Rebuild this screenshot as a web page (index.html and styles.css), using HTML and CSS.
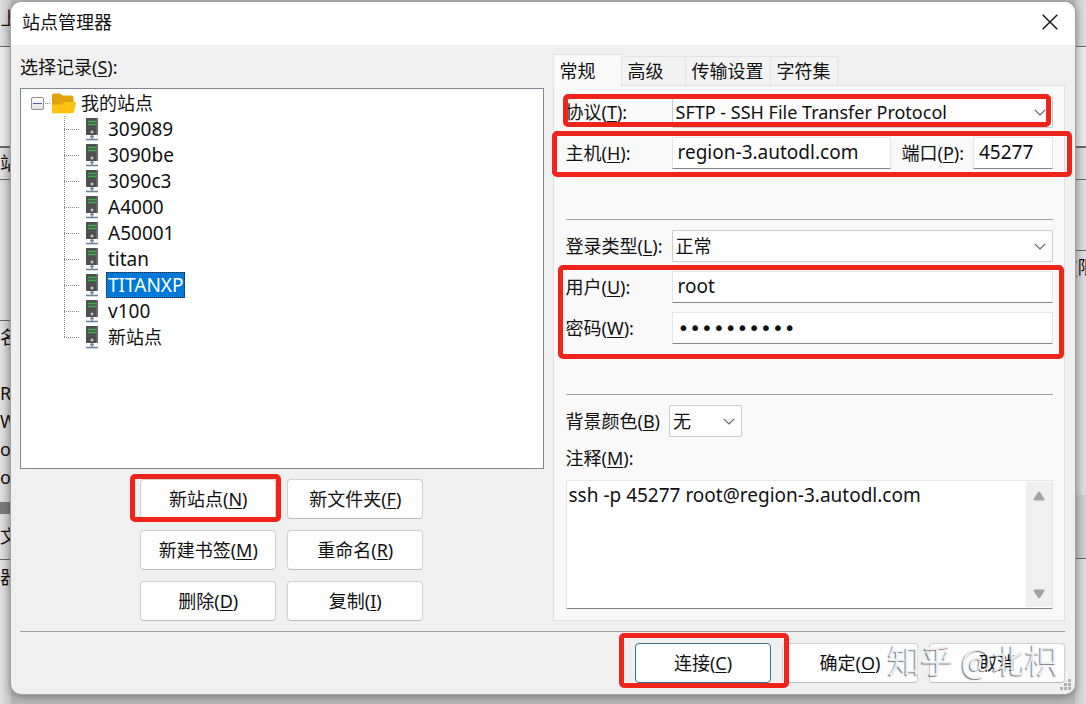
FILE: index.html
```html
<!DOCTYPE html>
<html lang="zh-CN">
<head>
    <meta charset="UTF-8">
    <meta name="viewport" content="width=device-width, initial-scale=1.0">
    <title>站点管理器</title>
    <link rel="stylesheet" href="styles.css">
</head>
<body>
    <!-- main window behind the dialog -->
    <div class="desktop" aria-hidden="true">
        <div class="strip">
            <div class="pane pane-menu">(上</div>
            <div class="pane pane-log"></div>
            <div class="pane pane-site">站</div>
            <div class="pane pane-tree"></div>
            <div class="pane pane-files">
                <div>名</div>
                <div></div>
                <div>Re</div>
                <div>W</div>
                <div>or</div>
                <div>o</div>
            </div>
            <div class="pane pane-scroll"></div>
            <div class="pane pane-status">文</div>
            <div class="pane pane-queue">器</div>
        </div>
        <div class="strip strip-right">
            <div class="pane pane-menu"></div>
            <div class="pane pane-log"></div>
            <div class="pane pane-site"></div>
            <div class="pane pane-remote"></div>
            <div class="pane pane-rights">(限</div>
            <div class="pane pane-status"></div>
            <div class="pane pane-queue"></div>
        </div>
    </div>

    <div class="dialog" role="dialog" aria-labelledby="dialog_title">
        <header class="titlebar">
            <h1 id="dialog_title">站点管理器</h1>
            <button class="close" type="button" aria-label="关闭">
                <svg width="16" height="16" viewBox="0 0 16 16"><path d="M0.7 0.7L15.3 15.3M15.3 0.7L0.7 15.3"/></svg>
            </button>
        </header>

        <form class="content">
            <div class="columns">
                <section class="sites">
                    <div class="caption" id="tree_label">选择记录(<u>S</u>):</div>
                    <div class="tree" role="tree" aria-labelledby="tree_label">
                        <div class="root" role="treeitem" aria-expanded="true">
                            <span class="expander"></span>
                            <span class="joint"></span>
                            <svg class="folder" width="25" height="21" viewBox="0 0 25 21">
                                <path d="M1 2.2Q1 .5 2.600 .5H9L11.500 2.500H20.500Q22.500 2.500 22.500 4.500V16H1z" fill="#e3a20c"/>
                                <path d="M1 20V12.500Q1 11.500 2.200 11.500H10.500L13.500 9H24Q25 9 24.800 10L23 18.800Q22.700 20.200 21.300 20.200H1z" fill="#ffc20e"/>
                            </svg>
                            <span class="name">我的站点</span>
                        </div>
                        <ul class="items" role="group">
                            <li role="treeitem"><span class="branch"></span><svg class="server" width="12" height="23"><use href="#server"/></svg><span class="name">309089</span></li>
                            <li role="treeitem"><span class="branch"></span><svg class="server" width="12" height="23"><use href="#server"/></svg><span class="name">3090be</span></li>
                            <li role="treeitem"><span class="branch"></span><svg class="server" width="12" height="23"><use href="#server"/></svg><span class="name">3090c3</span></li>
                            <li role="treeitem"><span class="branch"></span><svg class="server" width="12" height="23"><use href="#server"/></svg><span class="name">A4000</span></li>
                            <li role="treeitem"><span class="branch"></span><svg class="server" width="12" height="23"><use href="#server"/></svg><span class="name">A50001</span></li>
                            <li role="treeitem"><span class="branch"></span><svg class="server" width="12" height="23"><use href="#server"/></svg><span class="name">titan</span></li>
                            <li role="treeitem" aria-selected="true"><span class="branch"></span><svg class="server" width="12" height="23"><use href="#server"/></svg><span class="name selected">TITANXP</span></li>
                            <li role="treeitem"><span class="branch"></span><svg class="server" width="12" height="23"><use href="#server"/></svg><span class="name">v100</span></li>
                            <li role="treeitem"><span class="branch"></span><svg class="server" width="12" height="23"><use href="#server"/></svg><span class="name">新站点</span></li>
                        </ul>
                    </div>
                    <div class="site-buttons">
                        <div class="marked">
                            <button class="btn" type="button">新站点(<u>N</u>)</button>
                            <span class="mark mark-new"></span>
                        </div>
                        <button class="btn" type="button">新文件夹(<u>F</u>)</button>
                        <button class="btn" type="button">新建书签(<u>M</u>)</button>
                        <button class="btn" type="button">重命名(<u>R</u>)</button>
                        <button class="btn" type="button">删除(<u>D</u>)</button>
                        <button class="btn" type="button">复制(<u>I</u>)</button>
                    </div>
                </section>

                <section class="settings">
                    <div class="tabs" role="tablist">
                        <button class="tab active" type="button" role="tab" aria-selected="true">常规</button>
                        <button class="tab tab-wide" type="button" role="tab">高级</button>
                        <button class="tab" type="button" role="tab">传输设置</button>
                        <button class="tab" type="button" role="tab">字符集</button>
                    </div>
                    <div class="panel" role="tabpanel">
                        <div class="group marked">
                            <div class="row">
                                <label for="protocol">协议(<u>T</u>):</label>
                                <div class="select">
                                    <select id="protocol"><option>SFTP - SSH File Transfer Protocol</option></select>
                                    <svg width="12" height="7" viewBox="0 0 12 7"><path d="M.8.8L6 6L11.200.8"/></svg>
                                </div>
                            </div>
                            <span class="mark mark-protocol"></span>
                        </div>
                        <div class="group marked">
                            <div class="row row-host">
                                <label for="host">主机(<u>H</u>):</label>
                                <input class="field" id="host" type="text" value="region-3.autodl.com">
                                <label class="port-label" for="port">端口(<u>P</u>):</label>
                                <input class="field" id="port" type="text" value="45277">
                            </div>
                            <span class="mark mark-host"></span>
                        </div>
                        <hr class="divider">
                        <div class="row">
                            <label for="logon">登录类型(<u>L</u>):</label>
                            <div class="select">
                                <select id="logon"><option>正常</option></select>
                                <svg width="12" height="7" viewBox="0 0 12 7"><path d="M.8.8L6 6L11.200.8"/></svg>
                            </div>
                        </div>
                        <div class="group marked">
                            <div class="row">
                                <label for="user">用户(<u>U</u>):</label>
                                <input class="field" id="user" type="text" value="root">
                            </div>
                            <div class="row">
                                <label for="pass">密码(<u>W</u>):</label>
                                <input class="field password" id="pass" type="password" value="0123456789">
                            </div>
                            <span class="mark mark-login"></span>
                        </div>
                        <hr class="divider">
                        <div class="row row-color">
                            <label for="color">背景颜色(<u>B</u>)</label>
                            <div class="select">
                                <select id="color"><option>无</option></select>
                                <svg width="12" height="7" viewBox="0 0 12 7"><path d="M.8.8L6 6L11.200.8"/></svg>
                            </div>
                        </div>
                        <label class="notes-label" for="notes">注释(<u>M</u>):</label>
                        <div class="notes">
                            <textarea id="notes">ssh -p 45277 root@region-3.autodl.com</textarea>
                            <div class="scrollbar">
                                <svg width="12" height="10" viewBox="0 0 12 10"><path d="M5 1.200Q6 0 7 1.200L11.500 8Q12 9.500 10.500 9.500H1.500Q0 9.500 .5 8z"/></svg>
                                <svg width="12" height="10" viewBox="0 0 12 10"><path d="M5 8.800Q6 10 7 8.800L11.500 2Q12 .5 10.500 .5H1.500Q0 .5 .5 2z"/></svg>
                            </div>
                        </div>
                    </div>
                </section>
            </div>

            <footer class="actions">
                <div class="marked">
                    <button class="btn btn-default" type="submit">连接(<u>C</u>)</button>
                    <span class="mark mark-connect"></span>
                </div>
                <button class="btn" type="button">确定(<u>O</u>)</button>
                <button class="btn" type="button">取消</button>
            </footer>
        </form>

        <svg class="grip" width="12" height="12" viewBox="0 0 12 12">
            <path d="M8 0h3v3H8zM4 4h3v3H4zM8 4h3v3H8zM0 8h3v3H0zM4 8h3v3H4zM8 8h3v3H8z"/>
        </svg>
        <div class="watermark">知乎 @北枳</div>
    </div>

    <!-- server icon used by the tree -->
    <svg class="defs" width="0" height="0">
        <symbol id="server" viewBox="0 0 12 23">
            <rect x="0" y="0" width="12" height="17" fill="#505052"/>
            <rect x="10" y="0" width="2" height="17" fill="#69696b"/>
            <path d="M2 3.500H10M2 6.500H10" stroke="#35b044" stroke-width="1.400"/>
            <path d="M6 12.500V15.500M4.500 14H7.500" stroke="#e8e8e8"/>
            <path d="M6 17V21M4 18.500H8" stroke="#7288a0" stroke-width="1.500"/>
            <path d="M0 21.500H12" stroke="#6f8499" stroke-width="1.600"/>
        </symbol>
    </svg>
</body>
</html>
```
FILE: styles.css
```css
* {
    box-sizing: border-box;
}

body {
    position: relative;
    margin: 0;
    padding: 2px 11px 10px;
    min-height: 100vh;
    overflow: hidden;
    background: #b7b7b7;
    color: #111;
    font-family: "Noto Sans", "Noto Sans CJK SC", sans-serif;
    font-size: 18px;
    line-height: 24px;
}

button, input, select, textarea {
    font: inherit;
    color: inherit;
    margin: 0;
}

u {
    text-decoration-thickness: 1px;
    text-underline-offset: 2px;
}

.defs {
    position: absolute;
}

/* window behind */
.desktop {
    position: absolute;
    inset: 0;
    display: flex;
    justify-content: space-between;
}

.strip {
    width: 11px;
    overflow: hidden;
    white-space: nowrap;
    background: linear-gradient(to right, #e0e0e0, #c4c4c4);
}

.strip-right {
    background: linear-gradient(to right, #c6c6c6, #dedede);
}

.pane {
    border-bottom: 1px solid #666;
}

.pane-menu {
    height: 47px;
    padding-top: 6px;
    text-indent: -5px;
}

.pane-log {
    height: 101px;
    background: rgba(255, 255, 255, 0.4);
    border-bottom-width: 2px;
}

.pane-site {
    height: 32px;
    padding-top: 3px;
}

.pane-tree {
    height: 141px;
}

.pane-remote {
    height: 71px;
}

.pane-files {
    height: 181px;
    padding-top: 2px;
    border-bottom: 0;
    line-height: 28px;
}

.pane-files div {
    height: 28px;
}

.pane-rights {
    height: 244px;
    padding-top: 4px;
    border-bottom: 0;
    text-indent: -3px;
}

.pane-scroll {
    height: 12px;
    background: #777;
    border-bottom: 0;
}

.pane-status {
    height: 46px;
    padding-top: 10px;
}

.strip-right .pane-status {
    height: 64px;
    background: rgba(0, 0, 0, 0.06);
}

.pane-queue {
    padding-top: 5px;
    border-bottom: 0;
}

/* dialog */
.dialog {
    position: relative;
    background: #f0f0f0;
    border-radius: 10px;
    box-shadow: 0 0 0 1px #a3a3a3, 0 2px 8px rgba(0, 0, 0, 0.4);
}

.titlebar {
    display: flex;
    align-items: center;
    justify-content: space-between;
    height: 43px;
    padding: 0 17px 3px 11px;
    background: #fff;
    border-radius: 10px 10px 0 0;
}

.titlebar h1 {
    margin: 0;
    font-size: 18px;
    font-weight: normal;
}

.close {
    display: flex;
    padding: 0;
    border: 0;
    background: none;
}

.close svg {
    fill: none;
    stroke: #111;
    stroke-width: 1.4;
}

.content {
    padding: 9px 10px 11px 9px;
}

.columns {
    display: grid;
    grid-template-columns: 523fr 512fr;
    gap: 9px;
    padding-bottom: 10px;
    border-bottom: 1px solid #a0a0a0;
}

.sites {
    display: flex;
    flex-direction: column;
}

.caption {
    margin-bottom: 9px;
    padding-top: 1px;
}

.tree {
    flex: 1;
    padding: 1px 0 0;
    background: #fff;
    border: 1px solid #828790;
}

.root {
    display: flex;
    align-items: center;
    height: 26px;
    padding-left: 10px;
}

.expander {
    width: 13px;
    height: 13px;
    border: 1px solid #919191;
    border-radius: 2px;
    background: linear-gradient(#4b63a7, #4b63a7) center / 9px 1px no-repeat, linear-gradient(#fff, #e2e2e2);
}

.joint {
    width: 7px;
    height: 1px;
    background: repeating-linear-gradient(to right, transparent 0 1px, #888 1px 2px);
}

.root .name {
    padding-left: 5px;
}

.items {
    margin: 0;
    padding: 0 0 0 43px;
    list-style: none;
    font-size: 19px;
}

.items li {
    display: flex;
    align-items: center;
    height: 26px;
}

.items li:last-child {
    font-size: 18px;
}

.branch {
    align-self: stretch;
    width: 15px;
    margin-right: 7px;
    background:
        repeating-linear-gradient(to bottom, #888 0 1px, transparent 1px 2px) left top / 1px 100% no-repeat,
        repeating-linear-gradient(to right, #888 0 1px, transparent 1px 2px) left center / 15px 1px no-repeat;
}

.items li:last-child .branch {
    background-size: 1px 50%, 15px 1px;
}

.server {
    margin-right: 8px;
}

.items .name {
    height: 26px;
    padding: 0 1px;
    border: 1px solid transparent;
}

.items .selected {
    background: #0078d7;
    border: 1px dotted #222;
    color: #fff;
}

.site-buttons {
    display: grid;
    grid-template-columns: 136px 136px;
    justify-content: center;
    gap: 11px;
    margin-top: 10px;
}

.btn {
    width: 136px;
    height: 40px;
    padding: 0;
    background: #fdfdfd;
    border: 1px solid #d0d0d0;
    border-bottom-color: #bbb;
    border-radius: 4px;
}

.btn-default {
    border-color: #2f7397;
}

/* tabs */
.tabs {
    display: flex;
    align-items: flex-end;
    height: 31px;
}

.tab {
    height: 29px;
    padding: 0 6px;
    background: #f3f3f3;
    border: 1px solid #e3e3e3;
    border-bottom: 0;
    border-left: 0;
    text-align: left;
}

.tab-wide {
    width: 64px;
}

.tab.active {
    position: relative;
    width: 69px;
    height: 32px;
    margin-bottom: -1px;
    background: #f9f9f9;
    border-left: 1px solid #e3e3e3;
}

.panel {
    display: flex;
    flex-direction: column;
    padding: 10px 11px 11px 12px;
    background: #f9f9f9;
    border: 1px solid #e0e0e0;
}

.row {
    display: grid;
    grid-template-columns: 106px 1fr;
    align-items: center;
    height: 32px;
}

.group + .group,
.row + .row,
.row + .group {
    margin-top: 9px;
}

.row-host {
    grid-template-columns: 106px 1fr auto 80px;
}

.port-label {
    padding: 0 9px 0 10px;
}

.row-color {
    grid-template-columns: auto 73px;
    justify-content: start;
    gap: 9px;
}

.divider {
    width: 100%;
    height: 1px;
    margin: 50px 0 10px;
    border: 0;
    background: #a0a0a0;
}

.field {
    width: 100%;
    min-width: 0;
    height: 32px;
    padding: 0 5px 2px;
    background: #fff;
    border: 1px solid #e5e5e5;
    border-bottom-color: #868686;
    border-radius: 1px;
    font-size: 19px;
}

.password {
    padding-bottom: 0;
    font-family: "DejaVu Sans", sans-serif;
    font-size: 20px;
}

.select {
    display: grid;
    align-items: center;
}

.select select,
.select svg {
    grid-area: 1 / 1;
}

.select select {
    width: 100%;
    height: 32px;
    padding: 0 3px;
    appearance: none;
    background: #fdfdfd;
    border: 1px solid #ccc;
    border-radius: 1px;
}

.select svg {
    justify-self: end;
    margin-right: 7px;
    fill: none;
    stroke: #666;
    stroke-width: 1.2;
    pointer-events: none;
}

.notes-label {
    margin: 9px 0 10px;
}

.notes {
    display: flex;
    height: 129px;
    padding: 1px 0;
    background: #fff;
    border: 1px solid #e5e5e5;
    border-bottom-color: #868686;
}

.notes textarea {
    flex: 1;
    padding: 1px 2px;
    border: 0;
    resize: none;
    background: none;
    outline: none;
    overflow: hidden;
    font-size: 19px;
}

.scrollbar {
    display: flex;
    flex-direction: column;
    align-items: center;
    justify-content: space-between;
    width: 26px;
    padding: 9px 0 8px;
    background: #f0f0f0;
}

.scrollbar svg {
    fill: #a3a3a3;
}

.actions {
    display: flex;
    justify-content: flex-end;
    gap: 11px;
    padding-top: 11px;
}

/* red highlight boxes over the controls */
.marked {
    position: relative;
}

.mark {
    position: absolute;
    z-index: 1;
    border: 5px solid #f0241b;
    border-radius: 5px;
    pointer-events: none;
}

.mark-new {
    inset: -5px -5px -3px -10px;
}

.mark-protocol {
    inset: -2px 2px 1px -3px;
}

.mark-host {
    inset: -6px -19px -8px -14px;
}

.mark-login {
    inset: -6px -11px -15px -8px;
}

.mark-connect {
    inset: -10px -18px -5px -16px;
}

.grip {
    position: absolute;
    right: 3px;
    bottom: 3px;
    fill: #b0b0b0;
}

.watermark {
    position: absolute;
    right: 17px;
    bottom: 11px;
    font-family: "Noto Sans CJK SC", sans-serif;
    font-size: 33px;
    line-height: 48px;
    color: rgba(255, 255, 255, 0.85);
    text-shadow: -1px 1px 1px rgba(0, 0, 0, 0.5);
    pointer-events: none;
}
```
